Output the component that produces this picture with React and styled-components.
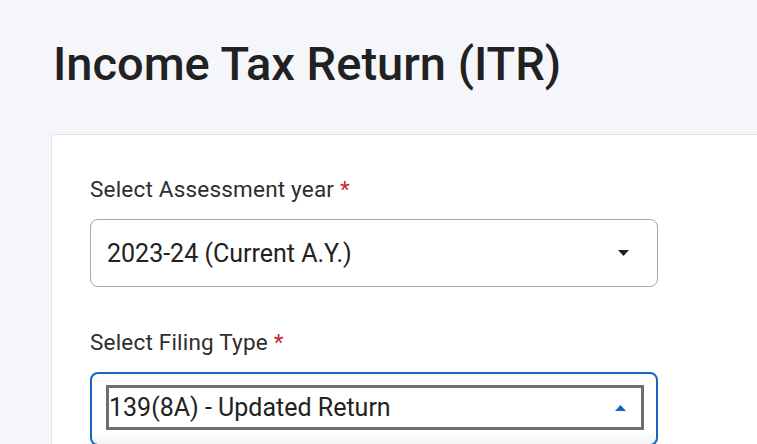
import React from "react";
import styled, { createGlobalStyle } from "styled-components";

const Global = createGlobalStyle`
  html, body { margin: 0; padding: 0; background: #f5f6fa; overflow: hidden; }
  body { font-family: Roboto, "Liberation Sans", sans-serif; }
`;

const Page = styled.div`
  padding: 32px 0 0 51px;
  width: 800px;
`;

const Title = styled.h1`
  margin: 0 0 0 2px;
  font-size: 47px;
  line-height: 64px;
  font-weight: 500;
  color: #212121;
`;

const Card = styled.div`
  margin-top: 38px;
  background: #fff;
  border: 1px solid #e1e2ea;
  border-radius: 4px;
  padding: 41px 38px 0 38px;
  height: 400px;
  display: flex;
  flex-direction: column;
  gap: 42px;
`;

const Field = styled.div`
  display: flex;
  flex-direction: column;
  gap: 17px;
  width: 568px;
`;

const Label = styled.label`
  font-size: 22.5px;
  line-height: 26px;
  letter-spacing: 0.2px;
  color: #2e2e2e;
`;

const Req = styled.span`
  color: #c62828;
`;

const SelectBox = styled.div`
  box-sizing: border-box;
  height: ${(p) => (p.$focused ? "74px" : "68px")};
  border: ${(p) => (p.$focused ? "2px solid #1565c0" : "1px solid #a8a8a8")};
  border-radius: 8px;
  display: flex;
  align-items: ${(p) => (p.$focused ? "flex-start" : "center")};
  padding: ${(p) => (p.$focused ? "11px 12px 0 14px" : "0 28px 0 16px")};
  position: relative;
  overflow: hidden;
`;

const Inner = styled.div`
  flex: 1;
  box-sizing: border-box;
  height: ${(p) => (p.$focused ? "45px" : "auto")};
  border: ${(p) => (p.$focused ? "3px solid #6e6e6e" : "none")};
  display: flex;
  align-items: center;
  justify-content: space-between;
  padding: ${(p) => (p.$focused ? "0 15px 0 0" : "0")};
  font-size: 25px;
  color: #222;
`;

const Shade = styled.div`
  position: absolute;
  left: 0;
  right: 0;
  bottom: 0;
  height: 12px;
  background: linear-gradient(to bottom, rgba(0,0,0,0), rgba(0,0,0,0.05));
`;

const Arrow = ({ up, color }) => (
  <svg width="11" height="6" viewBox="0 0 11 6">
    <path d={up ? "M0 6 L5.5 0 L11 6 Z" : "M0 0 L11 0 L5.5 6 Z"} fill={color} />
  </svg>
);

export default function App() {
  return (
    <>
      <Global />
      <Page>
        <Title>Income Tax Return (ITR)</Title>
        <Card>
          <Field>
            <Label>
              Select Assessment year <Req>*</Req>
            </Label>
            <SelectBox>
              <Inner>
                <span>2023-24 (Current A.Y.)</span>
                <Arrow color="#222" />
              </Inner>
            </SelectBox>
          </Field>
          <Field>
            <Label>
              Select Filing Type <Req>*</Req>
            </Label>
            <SelectBox $focused>
              <Inner $focused>
                <span>139(8A) - Updated Return</span>
                <Arrow up color="#1565c0" />
              </Inner>
              <Shade />
            </SelectBox>
          </Field>
        </Card>
      </Page>
    </>
  );
}
